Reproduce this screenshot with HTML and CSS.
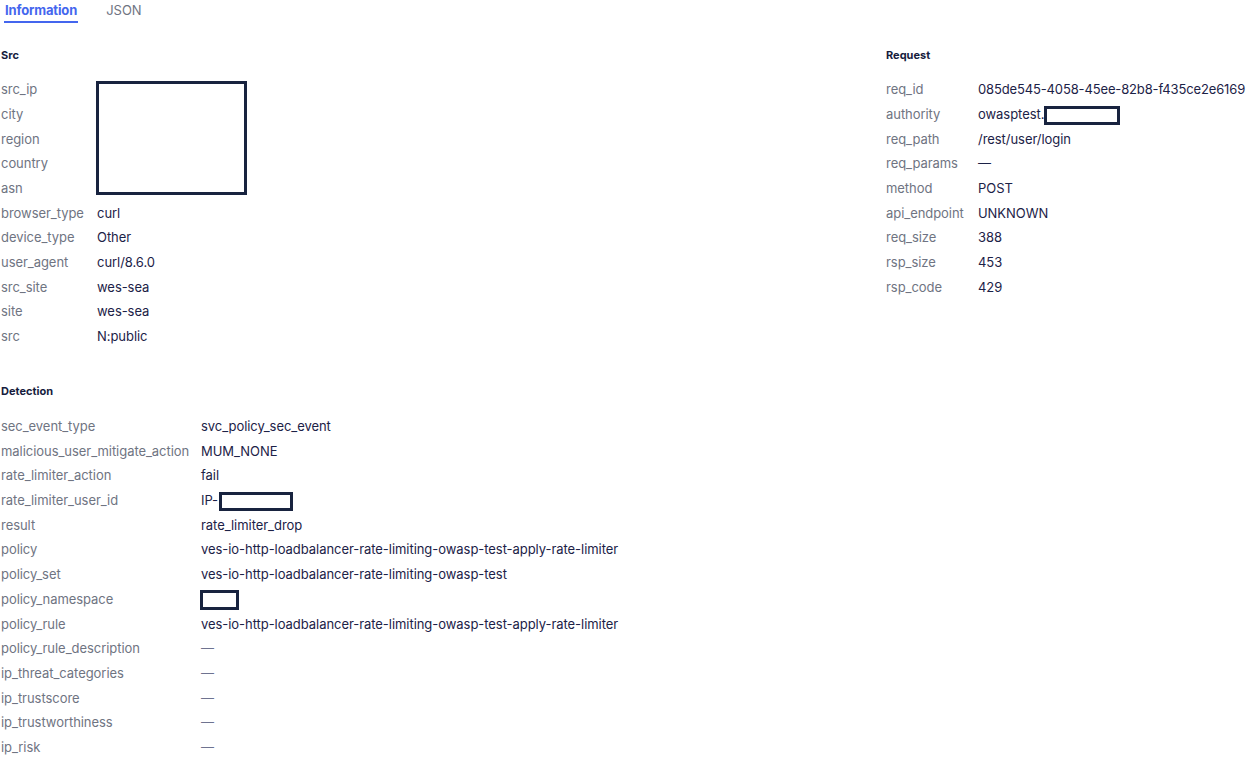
FILE: index.html
```html
<!DOCTYPE html>
<html>
<head>
<meta charset="utf-8">
<link rel="stylesheet" href="styles.css">
</head>
<body>
<div class="page">
  <div class="tabs">
    <div class="tab active">Information</div>
    <div class="tab">JSON</div>
  </div>
  <div class="grid">
    <section class="section">
      <h3 class="heading">Src</h3>
      <div class="kv src">
        <div class="k">src_ip</div><div class="v"><span class="redact redact-block"></span></div>
        <div class="k">city</div><div class="v"></div>
        <div class="k">region</div><div class="v"></div>
        <div class="k">country</div><div class="v"></div>
        <div class="k">asn</div><div class="v"></div>
        <div class="k">browser_type</div><div class="v">curl</div>
        <div class="k">device_type</div><div class="v">Other</div>
        <div class="k">user_agent</div><div class="v">curl/8.6.0</div>
        <div class="k">src_site</div><div class="v">wes-sea</div>
        <div class="k">site</div><div class="v">wes-sea</div>
        <div class="k">src</div><div class="v">N:public</div>
      </div>
    </section>
    <section class="section">
      <h3 class="heading">Request</h3>
      <div class="kv req">
        <div class="k">req_id</div><div class="v tight">085de545-4058-45ee-82b8-f435ce2e6169</div>
        <div class="k">authority</div><div class="v">owasptest.<span class="redact redact-auth"></span></div>
        <div class="k">req_path</div><div class="v">/rest/user/login</div>
        <div class="k">req_params</div><div class="v">—</div>
        <div class="k">method</div><div class="v">POST</div>
        <div class="k">api_endpoint</div><div class="v">UNKNOWN</div>
        <div class="k">req_size</div><div class="v">388</div>
        <div class="k">rsp_size</div><div class="v">453</div>
        <div class="k">rsp_code</div><div class="v">429</div>
      </div>
    </section>
    <section class="section detection">
      <h3 class="heading">Detection</h3>
      <div class="kv det">
        <div class="k">sec_event_type</div><div class="v">svc_policy_sec_event</div>
        <div class="k">malicious_user_mitigate_action</div><div class="v">MUM_NONE</div>
        <div class="k">rate_limiter_action</div><div class="v">fail</div>
        <div class="k">rate_limiter_user_id</div><div class="v">IP-<span class="redact redact-ip"></span></div>
        <div class="k">result</div><div class="v">rate_limiter_drop</div>
        <div class="k">policy</div><div class="v">ves-io-http-loadbalancer-rate-limiting-owasp-test-apply-rate-limiter</div>
        <div class="k">policy_set</div><div class="v">ves-io-http-loadbalancer-rate-limiting-owasp-test</div>
        <div class="k">policy_namespace</div><div class="v"><span class="redact redact-ns"></span></div>
        <div class="k">policy_rule</div><div class="v">ves-io-http-loadbalancer-rate-limiting-owasp-test-apply-rate-limiter</div>
        <div class="k">policy_rule_description</div><div class="v muted">—</div>
        <div class="k">ip_threat_categories</div><div class="v muted">—</div>
        <div class="k">ip_trustscore</div><div class="v muted">—</div>
        <div class="k">ip_trustworthiness</div><div class="v muted">—</div>
        <div class="k">ip_risk</div><div class="v muted">—</div>
      </div>
    </section>
  </div>
</div>
</body>
</html>
```
FILE: styles.css
```css
html, body {
  margin: 0;
  padding: 0;
  background: #ffffff;
}
body {
  font-family: Inter, "Noto Sans", sans-serif;
  font-size: 13px;
  color: #1c2247;
  overflow: hidden;
}
.page {
  padding-left: 1px;
}
.tabs {
  display: flex;
  gap: 27px;
  padding-left: 3px;
  height: 23px;
}
.tab {
  font-size: 13px;
  line-height: 21px;
  color: #6f7482;
  padding: 0 1px;
  box-sizing: border-box;
}
.tab.active {
  color: #4466ee;
  font-weight: 700;
  letter-spacing: -0.15px;
  border-bottom: 2px solid #4466ee;
  height: 23px;
}
.grid {
  display: grid;
  grid-template-columns: 885px 1fr;
  padding-top: 23.5px;
  row-gap: 34.5px;
}
.section {
  min-width: 0;
}
.detection {
  grid-column: 1 / 2;
}
.heading {
  margin: 0 0 14.6px 0;
  font-size: 11px;
  line-height: 16px;
  font-weight: 700;
  color: #161c3d;
}
.kv {
  display: grid;
  line-height: 24.7px;
}
.kv.src { grid-template-columns: 96px 1fr; }
.kv.req { grid-template-columns: 92px 1fr; }
.kv.det { grid-template-columns: 200px 1fr; }
.k {
  color: #6f7482;
  white-space: nowrap;
  letter-spacing: -0.05px;
}
.v {
  color: #1c2247;
  white-space: nowrap;
  position: relative;
  letter-spacing: -0.05px;
}
.v.tight {
  letter-spacing: -0.14px;
}
.v.muted {
  color: #6e7390;
}
.redact {
  display: inline-block;
  box-sizing: border-box;
  border: 3px solid #18233f;
  background: #ffffff;
  vertical-align: middle;
}
.redact-block {
  position: absolute;
  left: -1px;
  top: 4px;
  width: 151px;
  height: 114px;
}
.redact-auth {
  width: 76px;
  height: 19px;
}
.redact-ip {
  width: 74px;
  height: 19px;
  margin-left: 1px;
}
.redact-ns {
  width: 39px;
  height: 20px;
  margin-left: -1px;
}
```
